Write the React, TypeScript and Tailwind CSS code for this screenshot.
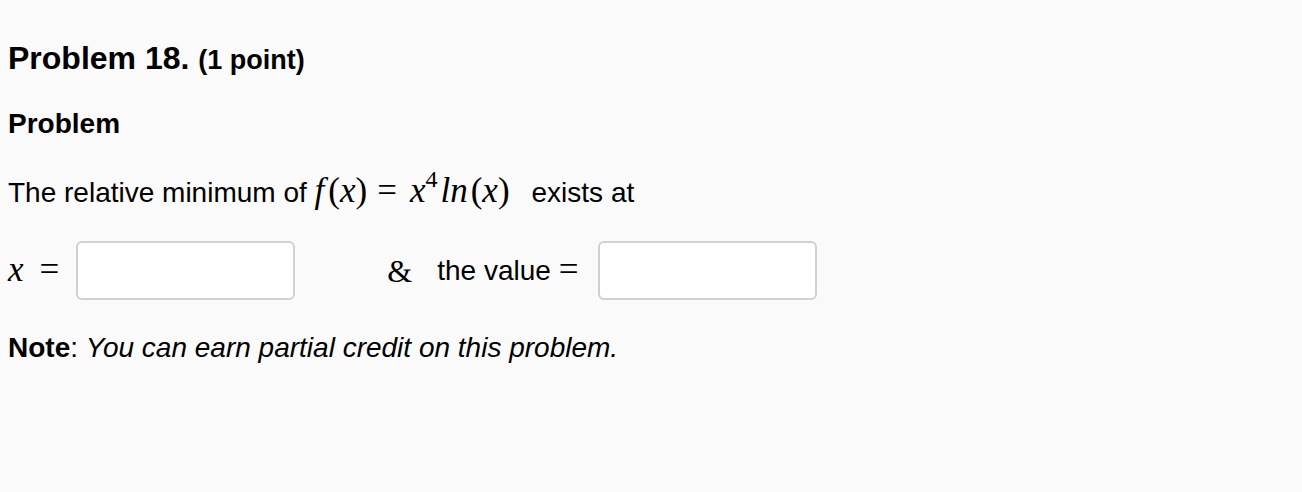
export default function App() {
    const serif = "font-['Liberation_Serif',serif]";
    return (
        <div className="min-h-[492px] bg-[#fafafa] px-2 pt-[38px] text-black font-['Liberation_Sans',Arial,sans-serif]">
            {/* Header */}
            <h1 className="font-bold text-[32px] leading-[40px]">
                Problem 18. <span className="text-[27px]">(1 point)</span>
            </h1>

            <h2 className="mt-[28px] font-bold text-[28px] leading-[32px]">Problem</h2>

            {/* Statement */}
            <p className="mt-[35px] text-[28px] leading-[32px]">
                The relative minimum of{" "}
                <span className={`${serif} text-[35px]`}>
                    <span className="italic">f</span>
                    <span className="ml-[4px]">(</span>
                    <span className="italic">x</span>
                    <span>)</span>
                    <span className="ml-[10px] mr-[13px]">=</span>
                    <span className="italic">x</span>
                    <sup className="text-[24px] -top-[15px]">4</sup>
                    <span className="italic ml-[3px]">ln</span>
                    <span className="ml-[3px]">(</span>
                    <span className="italic">x</span>
                    <span>)</span>
                </span>
                <span className="ml-[22px]">exists at</span>
            </p>

            {/* Answers */}
            <div className="mt-[32px] flex items-center text-[28px]">
                <span className={`${serif} italic text-[35px]`}>x</span>
                <span className={`${serif} ml-[16px] text-[35px]`}>=</span>
                <input
                    type="text"
                    className="ml-[17px] w-[219px] h-[59px] bg-white border-2 border-[#d0d0d0] rounded-[6px] outline-none"
                />
                <span className={`${serif} ml-[92px] text-[32px]`}>&amp;</span>
                <span className="ml-[25px]">the value</span>
                <span className={`${serif} ml-[8px] text-[35px]`}>=</span>
                <input
                    type="text"
                    className="ml-[19px] w-[219px] h-[59px] bg-white border-2 border-[#d0d0d0] rounded-[6px] outline-none"
                />
            </div>

            {/* Note */}
            <p className="mt-[32px] text-[28px] leading-[32px]">
                <span className="font-bold">Note</span>: <span className="italic">You can earn partial credit on this problem.</span>
            </p>
        </div>
    );
}
